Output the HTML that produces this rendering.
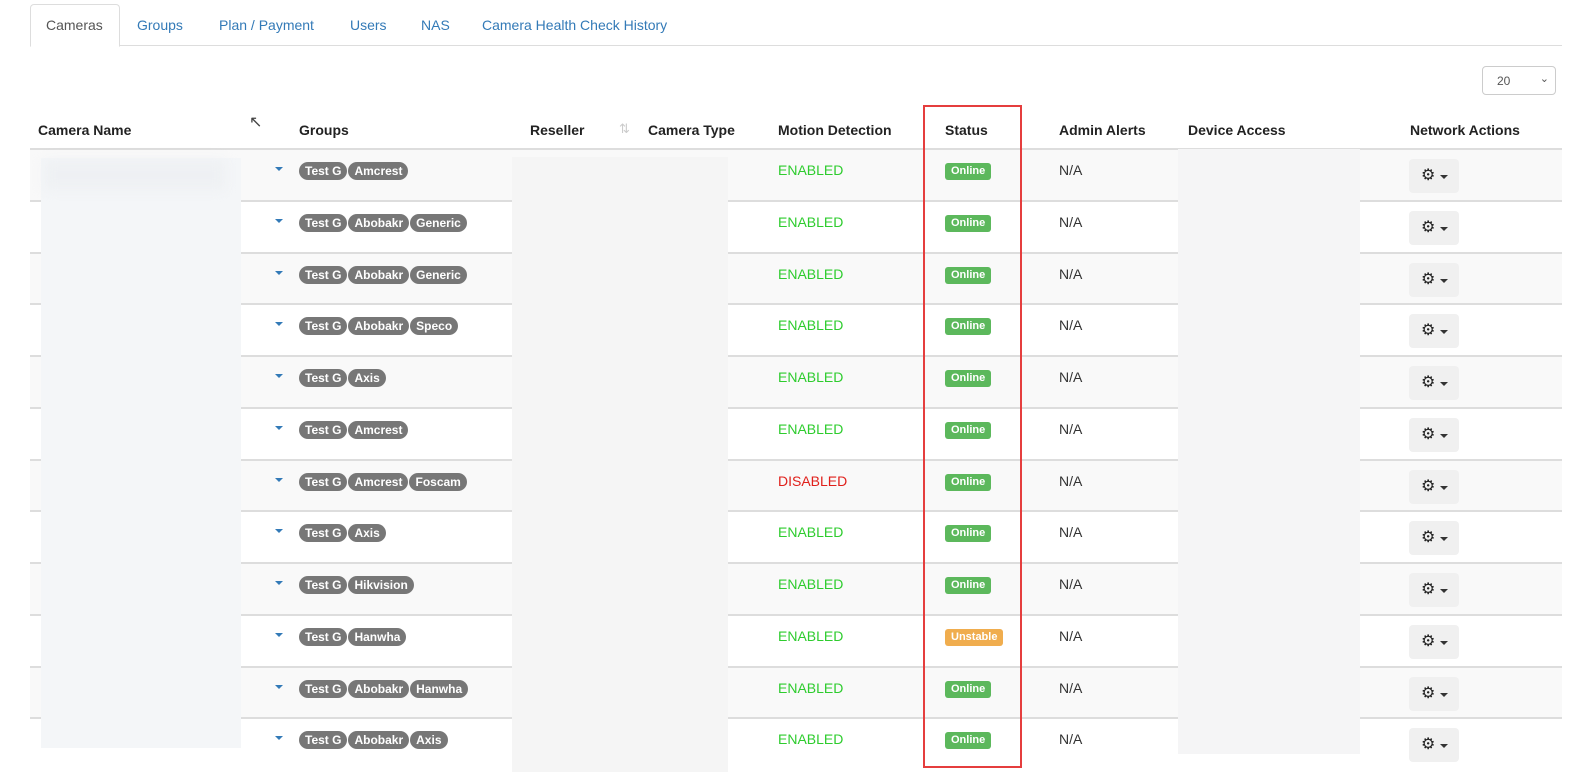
<!DOCTYPE html>
<html><head><meta charset="utf-8"><style>
*{box-sizing:border-box;margin:0;padding:0}
body{width:1577px;height:772px;overflow:hidden;background:#fff;font-family:"Liberation Sans",sans-serif;font-size:14px;color:#333;position:relative}
.a{position:absolute}
.tabs{position:absolute;left:30px;top:45px;width:1532px;border-top:1px solid #ddd}
.tab{position:absolute;top:17px;color:#337ab7;font-size:14px}
.act{position:absolute;left:30px;top:4px;width:90px;height:43px;border:1px solid #ddd;border-bottom:1px solid #fff;border-radius:4px 4px 0 0;background:#fff}
.th{position:absolute;top:122px;font-weight:bold;font-size:14px;color:#222}
.row{position:absolute;left:30px;width:1532px;height:51.75px;border-top:2px solid #ddd}
.odd{background:#f9f9f9}
.c{position:absolute;top:12px}
.car{position:absolute;left:245px;top:17px;width:0;height:0;border-left:4px solid transparent;border-right:4px solid transparent;border-top:4px solid #337ab7}
.bs{position:absolute;left:269px;top:12px;display:flex}
.b{background:#777;color:#fff;font-weight:bold;font-size:12px;height:18px;line-height:18px;padding:0 6px;border-radius:9px;margin-right:1px}
.en{left:748px;color:#2ecc2e}
.dis{left:748px;color:#e0201b}
.st{position:absolute;left:915px;top:13px;height:17px;line-height:17px;padding:0 6px;color:#fff;font-weight:bold;font-size:11px;border-radius:3px;background:#5cb85c}
.un{background:#f0ad4e}
.na{left:1029px}
.g{position:absolute;left:1379px;top:9px;width:50px;height:34px;background:#f0f0f0;border-radius:4px}
.g span{position:absolute;left:12px;top:6px;font-size:16px;color:#222}
.g i{position:absolute;left:31px;top:16px;border-left:4px solid transparent;border-right:4px solid transparent;border-top:4px solid #333}
.blur{position:absolute;background:#eef0f3;filter:blur(6px)}
</style></head><body>
<div class="tabs"></div>
<div class="act"></div>
<div class="tab" style="left:46px;color:#555">Cameras</div>
<div class="tab" style="left:137px">Groups</div>
<div class="tab" style="left:219px">Plan / Payment</div>
<div class="tab" style="left:350px">Users</div>
<div class="tab" style="left:421px">NAS</div>
<div class="tab" style="left:482px">Camera Health Check History</div>
<div class="a" style="left:1482px;top:66px;width:74px;height:29px;border:1px solid #ccc;border-radius:4px;font-size:12px;padding:7px 0 0 14px;color:#555">20<span style="position:absolute;right:6px;top:5px;font-size:11px">&#8964;</span></div>
<div class="th" style="left:38px">Camera Name</div>
<div class="th" style="left:299px">Groups</div>
<div class="th" style="left:530px">Reseller</div>
<div class="a" style="left:619px;top:121px;color:#ccc;font-size:13px">&#8645;</div>
<div class="th" style="left:648px">Camera Type</div>
<div class="th" style="left:778px">Motion Detection</div>
<div class="th" style="left:945px">Status</div>
<div class="th" style="left:1059px">Admin Alerts</div>
<div class="th" style="left:1188px">Device Access</div>
<div class="th" style="left:1410px">Network Actions</div>
<div class="a" style="left:249px;top:112px;font-size:16px;color:#444">&#8598;</div>

<div class="row odd" style="top:148px"><div class="car"></div><div class="bs"><span class="b">Test G</span><span class="b">Amcrest</span></div><div class="c en">ENABLED</div><div class="st">Online</div><div class="c na">N/A</div><div class="g"><span>&#9881;</span><i></i></div></div>
<div class="row" style="top:199.75px"><div class="car"></div><div class="bs"><span class="b">Test G</span><span class="b">Abobakr</span><span class="b">Generic</span></div><div class="c en">ENABLED</div><div class="st">Online</div><div class="c na">N/A</div><div class="g"><span>&#9881;</span><i></i></div></div>
<div class="row odd" style="top:251.5px"><div class="car"></div><div class="bs"><span class="b">Test G</span><span class="b">Abobakr</span><span class="b">Generic</span></div><div class="c en">ENABLED</div><div class="st">Online</div><div class="c na">N/A</div><div class="g"><span>&#9881;</span><i></i></div></div>
<div class="row" style="top:303.25px"><div class="car"></div><div class="bs"><span class="b">Test G</span><span class="b">Abobakr</span><span class="b">Speco</span></div><div class="c en">ENABLED</div><div class="st">Online</div><div class="c na">N/A</div><div class="g"><span>&#9881;</span><i></i></div></div>
<div class="row odd" style="top:355px"><div class="car"></div><div class="bs"><span class="b">Test G</span><span class="b">Axis</span></div><div class="c en">ENABLED</div><div class="st">Online</div><div class="c na">N/A</div><div class="g"><span>&#9881;</span><i></i></div></div>
<div class="row" style="top:406.75px"><div class="car"></div><div class="bs"><span class="b">Test G</span><span class="b">Amcrest</span></div><div class="c en">ENABLED</div><div class="st">Online</div><div class="c na">N/A</div><div class="g"><span>&#9881;</span><i></i></div></div>
<div class="row odd" style="top:458.5px"><div class="car"></div><div class="bs"><span class="b">Test G</span><span class="b">Amcrest</span><span class="b">Foscam</span></div><div class="c dis">DISABLED</div><div class="st">Online</div><div class="c na">N/A</div><div class="g"><span>&#9881;</span><i></i></div></div>
<div class="row" style="top:510.25px"><div class="car"></div><div class="bs"><span class="b">Test G</span><span class="b">Axis</span></div><div class="c en">ENABLED</div><div class="st">Online</div><div class="c na">N/A</div><div class="g"><span>&#9881;</span><i></i></div></div>
<div class="row odd" style="top:562px"><div class="car"></div><div class="bs"><span class="b">Test G</span><span class="b">Hikvision</span></div><div class="c en">ENABLED</div><div class="st">Online</div><div class="c na">N/A</div><div class="g"><span>&#9881;</span><i></i></div></div>
<div class="row" style="top:613.75px"><div class="car"></div><div class="bs"><span class="b">Test G</span><span class="b">Hanwha</span></div><div class="c en">ENABLED</div><div class="st un">Unstable</div><div class="c na">N/A</div><div class="g"><span>&#9881;</span><i></i></div></div>
<div class="row odd" style="top:665.5px"><div class="car"></div><div class="bs"><span class="b">Test G</span><span class="b">Abobakr</span><span class="b">Hanwha</span></div><div class="c en">ENABLED</div><div class="st">Online</div><div class="c na">N/A</div><div class="g"><span>&#9881;</span><i></i></div></div>
<div class="row" style="top:717.25px"><div class="car"></div><div class="bs"><span class="b">Test G</span><span class="b">Abobakr</span><span class="b">Axis</span></div><div class="c en">ENABLED</div><div class="st">Online</div><div class="c na">N/A</div><div class="g"><span>&#9881;</span><i></i></div></div>

<div class="a" style="left:41px;top:158px;width:200px;height:590px;background:#f4f6f8"></div>
<div class="blur" style="left:45px;top:160px;width:180px;height:30px"></div>
<div class="a" style="left:512px;top:157px;width:216px;height:615px;background:#f5f5f5"></div>
<div class="a" style="left:1178px;top:149px;width:182px;height:605px;background:#f5f5f6"></div>
<div class="a" style="left:923px;top:105px;width:99px;height:663px;border:2px solid #e53e3e"></div>
</body></html>
